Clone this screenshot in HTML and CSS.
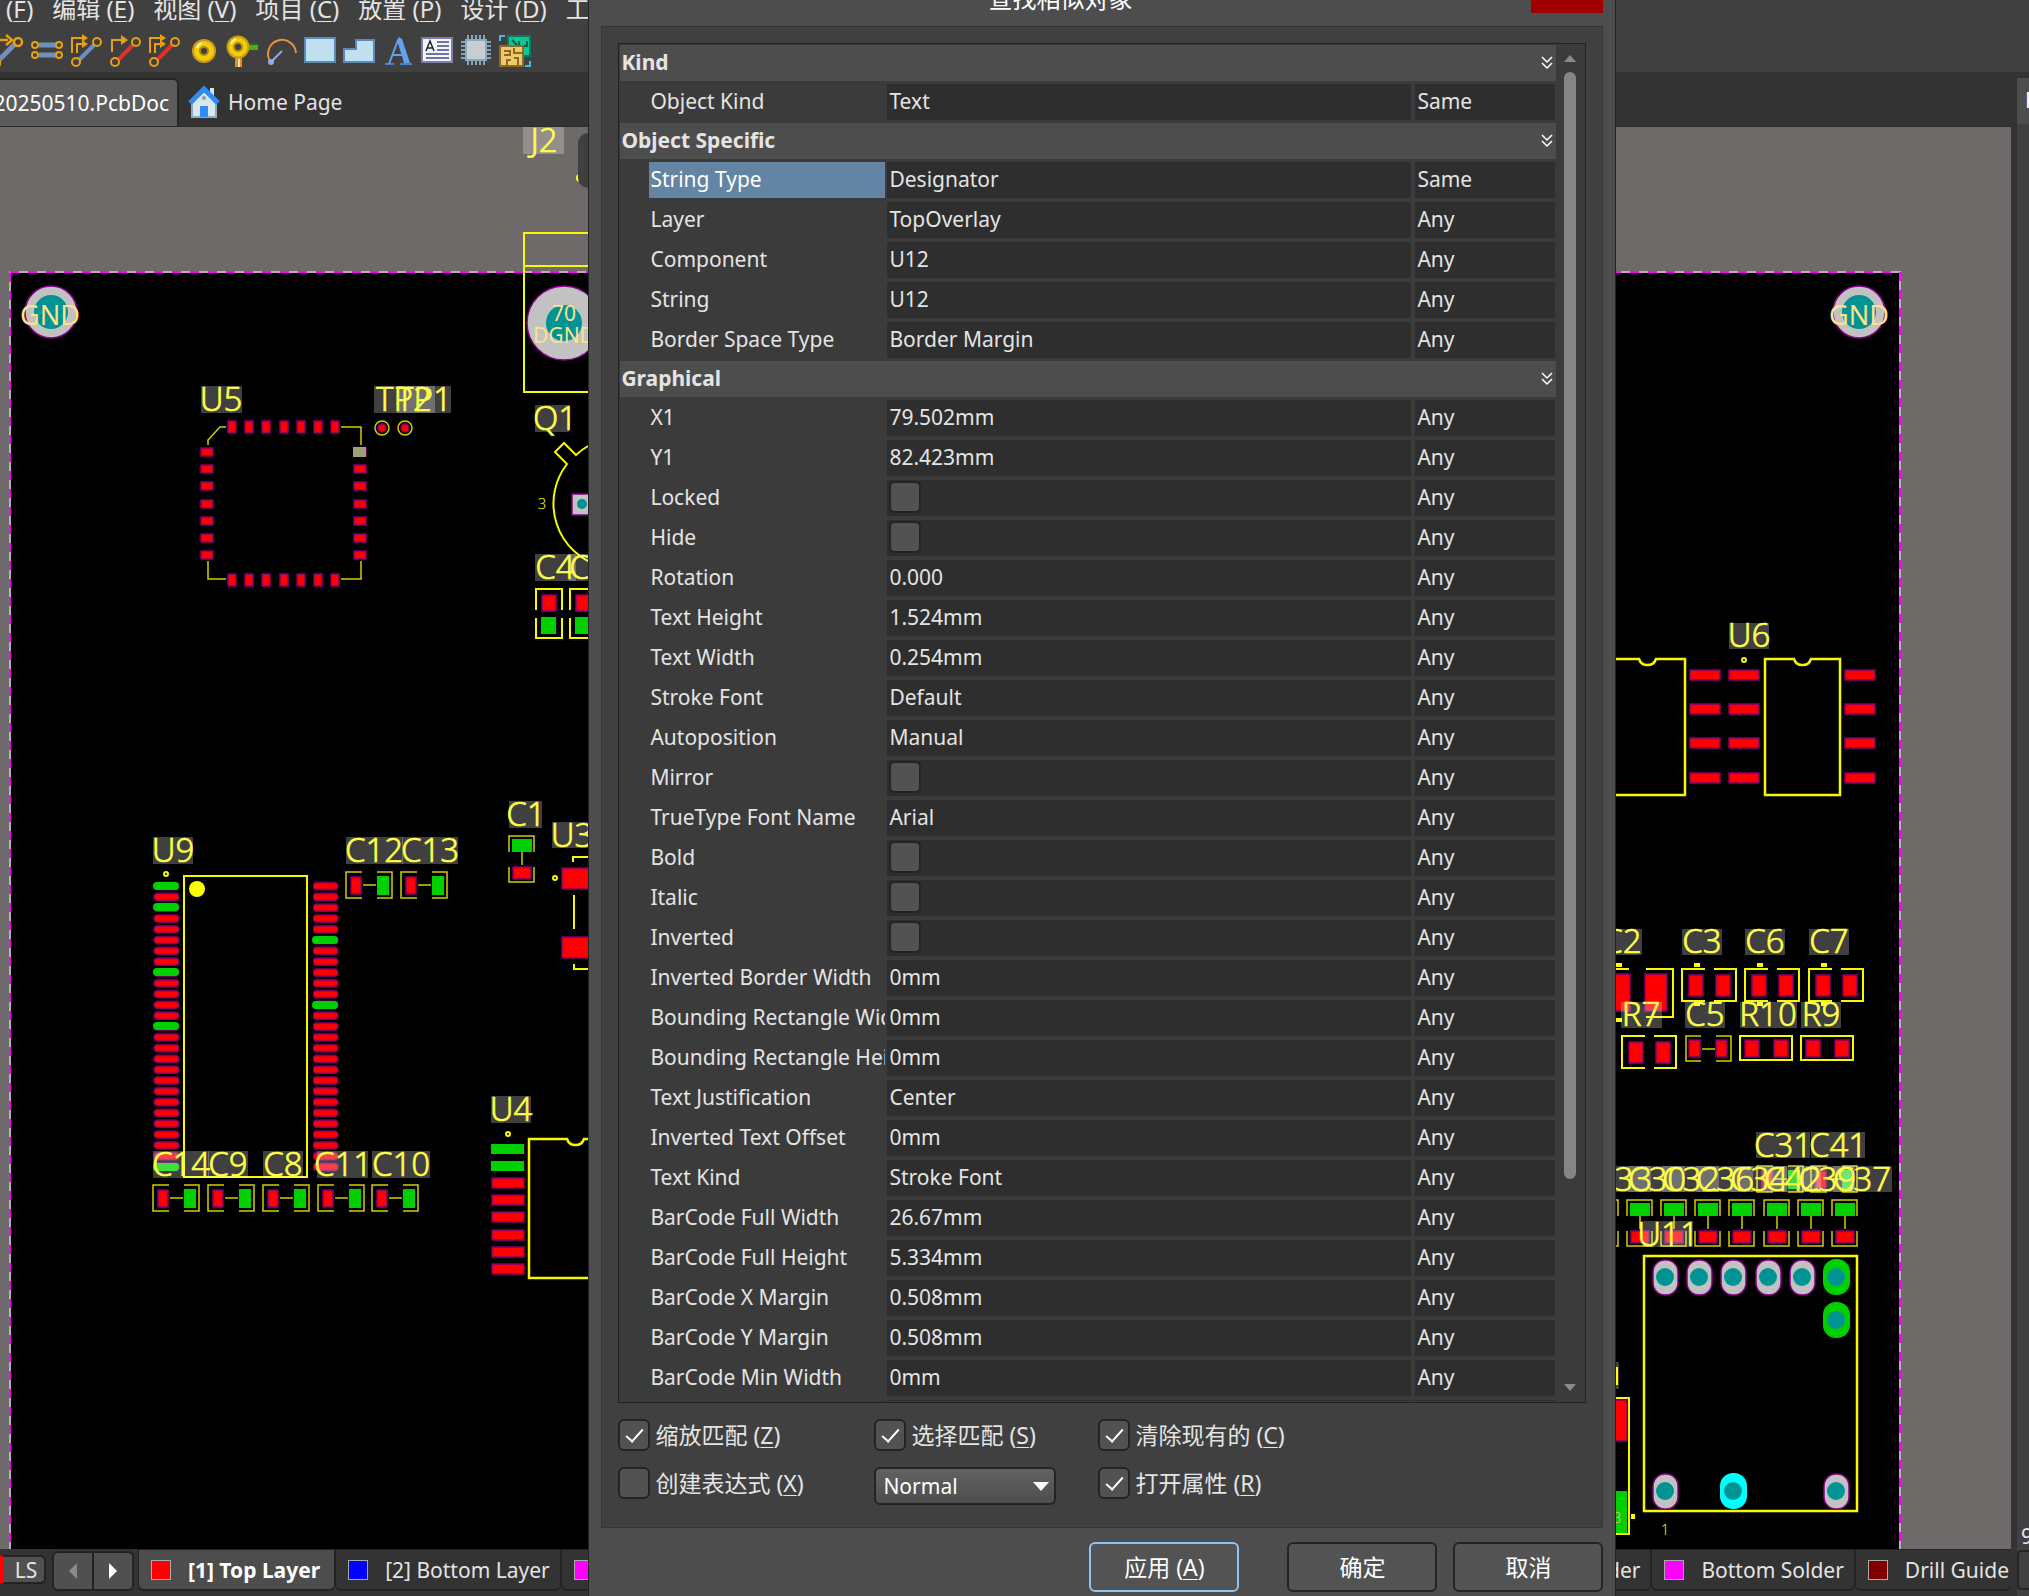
FILE: index.html
```html
<!DOCTYPE html>
<html lang="zh-CN">
<head>
<meta charset="utf-8">
<title>PCB Editor</title>
<link rel="stylesheet" href="styles.css">
</head>
<body>
<div class="app">
  <nav class="menubar">
    <a href="#">(<u>F</u>)</a><a href="#">编辑 (<u>E</u>)</a><a href="#">视图 (<u>V</u>)</a><a href="#">项目 (<u>C</u>)</a><a href="#">放置 (<u>P</u>)</a><a href="#">设计 (<u>D</u>)</a><a href="#">工具</a>
  </nav>
  <div class="toolbar">
    <button class="tool" aria-label="Route"><svg viewBox="0 0 32 34"><path d="M0 6h16M14 1l6 5-6 5" stroke="#e8a010" stroke-width="2.5" fill="none"/><path d="M6 27L23 10" stroke="#6f8fc0" stroke-width="5"/><g fill="none" stroke="#e8a010" stroke-width="2.5"><circle cx="26" cy="8" r="4"/><circle cx="4" cy="29" r="4"/></g></svg></button>
    <button class="tool" aria-label="Differential pair"><svg viewBox="0 0 32 34"><path d="M8 11h17M8 21h17" stroke="#6f8fc0" stroke-width="5"/><g fill="none" stroke="#e8a010" stroke-width="2"><circle cx="4" cy="11" r="3"/><circle cx="28" cy="11" r="3"/><circle cx="4" cy="21" r="3"/><circle cx="28" cy="21" r="3"/></g></svg></button>
    <button class="tool" aria-label="Multi route"><svg viewBox="0 0 32 34"><path d="M2 19V4h11M7 19v-9h6" stroke="#e8a010" stroke-width="2" fill="none"/><path d="M12 0l6 4-6 4zM12 6l6 4-6 4z" fill="#e8a010"/><path d="M9 26L24 11" stroke="#6f8fc0" stroke-width="4"/><g fill="none" stroke="#e8a010" stroke-width="2"><circle cx="27" cy="8" r="4"/><circle cx="6" cy="28" r="4"/></g></svg></button>
    <button class="tool" aria-label="Interactive route"><svg viewBox="0 0 32 34"><path d="M3 18V6h11" stroke="#e8a010" stroke-width="2" fill="none"/><path d="M12 1l7 5-7 5z" fill="#e8a010"/><path d="M9 26L24 11" stroke="#e0302a" stroke-width="4"/><g fill="none" stroke="#e8a010" stroke-width="2"><circle cx="27" cy="8" r="4"/><circle cx="6" cy="28" r="4"/></g></svg></button>
    <button class="tool" aria-label="Interactive multi route"><svg viewBox="0 0 32 34"><path d="M2 19V4h11M7 19v-9h6" stroke="#e8a010" stroke-width="2" fill="none"/><path d="M12 0l6 4-6 4zM12 6l6 4-6 4z" fill="#e8a010"/><path d="M9 26L24 11" stroke="#e0302a" stroke-width="4"/><g fill="none" stroke="#e8a010" stroke-width="2"><circle cx="27" cy="8" r="4"/><circle cx="6" cy="28" r="4"/></g></svg></button>
    <button class="tool" aria-label="Pad"><svg viewBox="0 0 32 34"><circle cx="17" cy="17" r="11" fill="#f2cc08" stroke="#c79a18" stroke-width="2"/><circle cx="17" cy="17" r="4" fill="#404040" stroke="#b08a10" stroke-width="2"/><path d="M10 14a8 8 0 0 1 5-5" stroke="#fff2a0" stroke-width="2" fill="none"/></svg></button>
    <button class="tool" aria-label="Via"><svg viewBox="0 0 32 34"><path d="M22 10h10v6H22z" fill="#4fa818"/><path d="M22 9h10v2H22z" fill="#1f6f10"/><path d="M9 22h7v11H9z" fill="#e88a18"/><path d="M12 22h2v11h-2z" fill="#ffe0b0"/><circle cx="12" cy="13" r="10.500" fill="#f2cc08" stroke="#c79a18" stroke-width="2"/><circle cx="12" cy="13" r="4" fill="#404040" stroke="#b08a10" stroke-width="2"/><path d="M5 10a8 8 0 0 1 5-5" stroke="#fff2a0" stroke-width="2" fill="none"/></svg></button>
    <button class="tool" aria-label="Arc"><svg viewBox="0 0 32 34"><path d="M5 27A14 14 0 1 1 31 19" stroke="#e8903c" stroke-width="2" fill="none"/><path d="M6 28L17 17" stroke="#86aef0" stroke-width="2"/><circle cx="6" cy="28" r="3" fill="#86aef0"/></svg></button>
    <button class="tool" aria-label="Fill"><svg viewBox="0 0 32 34"><path d="M1 4h30v24H1z" fill="#bfe0ec" stroke="#5c8ab8" stroke-width="2"/></svg></button>
    <button class="tool" aria-label="Polygon"><svg viewBox="0 0 32 34"><path d="M13 6h18v22H1V15h12z" fill="#bfe0ec" stroke="#5c8ab8" stroke-width="2"/></svg></button>
    <button class="tool" aria-label="String"><svg viewBox="0 0 32 34"><path d="M3 30h9M18 30h12" stroke="#4a80c8" stroke-width="2"/><path d="M7 30L16 6M11 21h11" stroke="#62a2ea" stroke-width="2" fill="none"/><path d="M15 6l2-3 3 2 8 24h-6z" fill="#62a2ea"/></svg></button>
    <button class="tool" aria-label="Text frame"><svg viewBox="0 0 32 34"><path d="M1 4h30v24H1z" fill="#f4f6fa" stroke="#7a7fae" stroke-width="2"/><path d="M5 17l4-10 4 10M6 14h6" stroke="#222" stroke-width="1.500" fill="none"/><path d="M16 8h12M16 12h12M16 16h12M5 20h23M5 24h23" stroke="#6d72a8" stroke-width="2"/></svg></button>
    <button class="tool" aria-label="Component"><svg viewBox="0 0 32 34"><path d="M8 1v30M12 1v30M16 1v30M20 1v30M24 1v30M1 8h30M1 12h30M1 16h30M1 20h30M1 24h30" stroke="#7fa6be" stroke-width="2"/><path d="M6 6h20v20H6z" fill="#c6ced4" stroke="#8aa8ba" stroke-width="2"/></svg></button>
    <button class="tool" aria-label="Embedded board"><svg viewBox="0 0 32 34"><path d="M1 7V2h5M31 27v5h-5" stroke="#4cb4f0" stroke-width="2" fill="none"/><path d="M9 2h22v20H9z" fill="#10c494" stroke="#0a7a5c" stroke-width="2"/><path d="M13 6l5 5M20 7v5M28 7v5h-4" stroke="#0a5c46" stroke-width="2" fill="none"/><path d="M1 12h23v20H1z" fill="#f2c868" stroke="#8a6a28" stroke-width="2"/><path d="M5 17h6v4H5M15 14v5h8M8 31v-5h4M19 31v-7h-4" stroke="#8a6a28" stroke-width="2" fill="none"/></svg></button>
  </div>
  <div class="workspace">
    <main class="document">
      <div class="doc-tabs">
        <a href="#" class="doc-tab doc-tab--active">20250510.PcbDoc</a>
        <a href="#" class="doc-tab">
          <svg class="home" viewBox="0 0 32 34"><path d="M22 3h4v10h-4z" fill="#d8e4ea"/><path d="M4 15L16 4l12 11v17H4z" fill="#dbe6f0" stroke="#8ab0bc" stroke-width="2"/><path d="M2 18L16 4l14 14" fill="none" stroke="#2f8cf4" stroke-width="5"/><circle cx="16" cy="13" r="2" fill="#7aa4b0"/><path d="M12 21h8v11h-8z" fill="#2f8cf4"/></svg>
          <span>Home Page</span></a>
      </div>
      <svg class="board" viewBox="0 127 2011 1422" preserveAspectRatio="xMinYMin slice">
        <defs>
          <pattern id="pins" patternUnits="userSpaceOnUse" x="153" y="880.600" width="159" height="10.800"><rect x="1" y="2" width="25" height="7" rx="3.500" class="pad"/></pattern>
          <g id="capH"><path class="silk thin" d="M16 0H0V26H16M31 0H46V26H31M17 13H30"/><path class="pad" d="M5 5h10v17H5z"/><path class="net" d="M31 4h12v19H31z"/></g>
          <g id="capV"><path class="silk thin" d="M0 16V0H25V16M0 31V46H25V31M13 16V29"/><path class="net" d="M3 3h20v13H3z"/><path class="pad" d="M4 31h18v12H4z"/></g>
          <g id="capQ"><path class="silk" d="M0 21V0H26V21M0 29V49H26V29"/><path class="pad" d="M6 6h14v16H6z"/><path class="net" d="M5 28h15v17H5z"/></g>
          <g id="capW"><path class="silk" d="M23 0H0V32H23M32 0H54V32H32"/><path class="pad" d="M7 6h14v21H7zM34 6h14v21H34z"/></g>
          <path id="marks" class="dot" d="M12-6h6v4h-6zM12 33h6v4h-6z"/>
          <g id="res"><path class="silk" d="M0 0h52v24H0z"/><path class="pad" d="M5 4h14v17H5zM34 4h14v17H34z"/></g>
          <g id="mount"><circle r="26" class="copper"/><circle r="17" class="hole"/></g>
          <g id="oval"><rect x="-12" y="-17" width="25" height="35" rx="12" class="copper"/><circle r="9" class="hole"/></g>
          <path id="pinsH" class="pad" d="M-4-6h8V6h-8zM13-6h8V6h-8zM30-6h8V6h-8zM48-6h8V6h-8zM65-6h8V6h-8zM82-6h8V6h-8zM99-6h8V6h-8z"/>
          <path id="pinsV" class="pad" d="M-6-4H6V4H-6zM-6 13H6v8H-6zM-6 30H6v8H-6zM-6 48H6v8H-6zM-6 65H6v8H-6zM-6 82H6v8H-6zM-6 99H6v8H-6z"/>
          <path id="so4" class="pad" d="M0-5h30V5H0zM0 29h30v10H0zM0 63h30v10H0zM0 98h30v10H0z"/>
        </defs>
        <rect x="10" y="272" width="1890" height="1400" class="area"/>
        <rect x="10" y="272" width="1890" height="1400" class="edge"/>

        <use href="#mount" x="51" y="312"/><text x="50" y="325" class="pin">GND</text>
        <use href="#mount" x="1859" y="312"/><text x="1859" y="325" class="pin">GND</text>
        <path class="silk" d="M620 233H524V392H620M524 266H620"/>
        <circle cx="564" cy="323" r="37" class="copper"/><circle cx="564" cy="323" r="18" class="hole"/>
        <text x="564" y="321" class="pin pin--mid">70</text><text x="564" y="343" class="pin pin--mid">DGND</text>

        <path class="silk thin" d="M208 445V440L220 427H226M341 427H361V445M208 561V579H226M341 579H361V561"/>
        <use href="#pinsH" x="232" y="427"/><use href="#pinsH" x="232" y="580"/>
        <use href="#pinsV" x="207" y="452"/><use href="#pinsV" x="360" y="452"/>
        <path fill="#a0a078" d="M353 447h13v10h-13z"/>
        <g class="silk thin"><circle cx="382" cy="428" r="7"/><circle cx="405" cy="428" r="7"/></g>
        <g class="pad"><circle cx="382" cy="428" r="4"/><circle cx="405" cy="428" r="4"/></g>

        <path class="silk" d="M588 446A65 65 0 0 0 576 455L564 443 555 452 567 464A65 65 0 0 0 600 566"/>
        <path class="copper" d="M572 494h22v21h-22z"/><circle cx="582" cy="504" r="5" class="hole"/>
        <text class="tiny" x="542" y="509">3</text>
        <use href="#capQ" x="536" y="589"/><use href="#capQ" x="570" y="589"/>

        <path class="silk" d="M184 876H307V1177H184z"/>
        <circle cx="166" cy="874" r="2" class="silk"/><circle cx="197" cy="889" r="8" class="dot"/>
        <path fill="url(#pins)" d="M153 881h27v291h-27zM312 881h27v291h-27z"/>
        <g class="net"><rect x="153" y="882" width="26" height="8" rx="4"/><rect x="153" y="903" width="26" height="8" rx="4"/><rect x="153" y="968" width="26" height="8" rx="4"/><rect x="153" y="1022" width="26" height="8" rx="4"/><rect x="153" y="1163" width="26" height="8" rx="4"/><rect x="312" y="936" width="26" height="8" rx="4"/><rect x="312" y="1001" width="26" height="8" rx="4"/></g>
        <use href="#capH" x="346" y="872"/><use href="#capH" x="401" y="872"/>
        <use href="#capH" x="153" y="1185"/><use href="#capH" x="208" y="1185"/><use href="#capH" x="263" y="1185"/><use href="#capH" x="318" y="1185"/><use href="#capH" x="372" y="1185"/>
        <use href="#capV" x="509" y="836"/>

        <circle cx="555" cy="878" r="2" class="silk"/><path class="silk" d="M573 862V857H600M574 895V929M574 964V969H600"/>
        <path class="pad" d="M562 868h40v21h-40zM562 937h40v21h-40z"/>
        <circle cx="508" cy="1134" r="2" class="silk"/>
        <path class="silk bold" d="M600 1139H584A9 9 0 0 1 567 1139H529V1278H600"/>
        <path class="net" d="M491 1144h33v10h-33zM491 1161h33v10h-33z"/>
        <path class="pad" d="M492 1178h32v10h-32zM492 1195h32v10h-32zM492 1212h32v10h-32zM492 1230h32v10h-32zM492 1247h32v10h-32zM492 1264h32v10h-32z"/>

        <path class="silk bold" d="M1600 659H1639A9 9 0 0 0 1656 659H1685V795H1600M1765 659H1794A9 9 0 0 0 1811 659H1840V795H1765z"/>
        <circle cx="1744" cy="660" r="2" class="silk"/>
        <use href="#so4" x="1690" y="675"/><use href="#so4" x="1729" y="675"/><use href="#so4" x="1845" y="675"/>

        <path class="silk" d="M1600 969H1629M1646 969H1673V1017H1646"/><path class="pad" d="M1600 974h30v37h-30zM1645 974h22v37h-22z"/><path class="dot" d="M1616 963h6v4h-6zM1616 1018h6v4h-6z"/>
        <use href="#capW" x="1682" y="969"/><use href="#capW" x="1745" y="969"/><use href="#capW" x="1809" y="969"/><use href="#capW" x="1622" y="1036"/>
        <use href="#marks" x="1682" y="969"/><use href="#marks" x="1745" y="969"/><use href="#marks" x="1809" y="969"/>
        <path class="silk thin" d="M1701 1036H1686V1061H1701M1716 1036H1731V1061H1716M1702 1049H1715"/><path class="pad" d="M1689 1040h11v17h-11zM1716 1040h11v17h-11z"/>
        <use href="#res" x="1740" y="1036"/><use href="#res" x="1801" y="1036"/>

        <use href="#capH" x="1757" y="1166"/><use href="#capH" x="1811" y="1166"/>
        <use href="#capV" x="1593" y="1200"/><use href="#capV" x="1627" y="1200"/><use href="#capV" x="1661" y="1200"/><use href="#capV" x="1695" y="1200"/><use href="#capV" x="1729" y="1200"/><use href="#capV" x="1764" y="1200"/><use href="#capV" x="1798" y="1200"/><use href="#capV" x="1832" y="1200"/>
        <path class="silk bold" d="M1644 1256H1857V1511H1644z"/>
        <use href="#oval" x="1665" y="1277"/><use href="#oval" x="1699" y="1277"/><use href="#oval" x="1733" y="1277"/><use href="#oval" x="1768" y="1277"/><use href="#oval" x="1802" y="1277"/><use href="#oval" x="1665" y="1491"/><use href="#oval" x="1836" y="1491"/>
        <g class="net"><rect x="1823" y="1259" width="27" height="36" rx="13"/><rect x="1823" y="1302" width="27" height="36" rx="13"/></g>
        <rect x="1720" y="1473" width="27" height="36" rx="13" fill="#0ff"/>
        <g class="hole"><circle cx="1836" cy="1277" r="9"/><circle cx="1836" cy="1320" r="9"/><circle cx="1733" cy="1491" r="9"/></g>
        <text x="1665" y="1535" class="tiny">1</text>
        <path class="silk" d="M1600 1398H1629V1534H1600"/><path class="pad" d="M1600 1400h27v41h-27z"/><path class="net" d="M1600 1491h27v42h-27z"/><path class="dot" d="M1631 1514h4v5h-4z"/>
        <text x="1617" y="1523" class="tiny tiny--pink">3</text>
        <path class="tag" d="M1600 1362h19v27h-19z"/><path class="dot" d="M1616 1367h2v18h-2z"/>

        <path class="tag" d="M523 127h41v27h-41zM201 386h41v27h-41zM374 386h61v27h-61zM535 405h34v27h-34zM535 554h41v27h-41zM153 837h40v27h-40zM346 837h57v27h-57zM153 1151h56v27h-56zM263 1151h40v27h-40zM317 1151h51v27h-51zM372 1151h58v27h-58zM509 801h33v27h-33zM552 822h41v26h-41zM491 1096h40v27h-40z"/>
        <path class="tag" d="M397 386h54v27h-54zM569 554h41v27h-41zM402 837h56v27h-56zM208 1151h40v27h-40z"/>
        <path class="tag" d="M1729 623h40v26h-40zM1601 929h41v26h-41zM1682 929h40v26h-40zM1745 929h40v26h-40zM1809 929h40v26h-40zM1621 1002h41v26h-41zM1685 1002h40v26h-40zM1740 1002h57v26h-57zM1801 1002h40v26h-40zM1756 1132h54v26h-54zM1811 1132h54v26h-54zM1643 1221h50v26h-50z"/>
        <g class="tag"><path d="M1594 1166h57v26h-57z"/><path d="M1628 1166h57v26h-57z"/><path d="M1662 1166h57v26h-57z"/><path d="M1696 1166h57v26h-57z"/><path d="M1730 1166h57v26h-57z"/><path d="M1764 1166h57v26h-57z"/><path d="M1798 1166h57v26h-57z"/><path d="M1833 1166h59v26h-59z"/></g>
        <g class="label">
          <text x="544" y="152">J2</text><text x="221" y="411">U5</text><text x="404" y="411">TP2</text><text x="424" y="411">TP1</text>
          <text x="555" y="430">Q1</text><text x="555" y="579">C4</text><text x="589" y="579">C3</text>
          <text x="173" y="862">U9</text><text x="374" y="862">C12</text><text x="430" y="862">C13</text>
          <text x="181" y="1176">C14</text><text x="228" y="1176">C9</text><text x="283" y="1176">C8</text><text x="343" y="1176">C11</text><text x="401" y="1176">C10</text>
          <text x="526" y="826">C1</text><text x="572" y="847">U3</text><text x="511" y="1121">U4</text>
          <text x="1749" y="647">U6</text><text x="1622" y="953">C2</text><text x="1702" y="953">C3</text><text x="1765" y="953">C6</text><text x="1829" y="953">C7</text>
          <text x="1641" y="1026">R7</text><text x="1705" y="1026">C5</text><text x="1768" y="1026">R10</text><text x="1821" y="1026">R9</text>
          <text x="1783" y="1157">C31</text><text x="1838" y="1157">C41</text><text x="1668" y="1246">U11</text>
          <text x="1623" y="1191">C33</text><text x="1657" y="1191">C30</text><text x="1691" y="1191">C32</text><text x="1725" y="1191">C36</text><text x="1759" y="1191">C34</text><text x="1793" y="1191">C42</text><text x="1827" y="1191">C39</text><text x="1862" y="1191">C37</text>
        </g>
        <circle cx="580" cy="178" r="4" class="dot"/><rect x="578" y="133" width="60" height="55" rx="10" fill="#404040"/>
      </svg>
      <div class="layers">
        <div class="layer-group">
          <button class="layer-set">LS</button>
          <div class="layer-nav">
            <button aria-label="Previous layer"><svg viewBox="0 0 10 16"><path d="M9 0v16L1 8z" fill="#8a8a8a"/></svg></button>
            <button aria-label="Next layer"><svg viewBox="0 0 10 16"><path d="M1 0v16l8-8z" fill="#fff"/></svg></button>
          </div>
          <a href="#" class="layer layer--active"><i class="swatch swatch--red"></i>[1] Top Layer</a>
          <a href="#" class="layer"><i class="swatch swatch--blue"></i>[2] Bottom Layer</a>
          <a href="#" class="layer"><i class="swatch swatch--magenta"></i></a>
        </div>
        <div class="layer-group layer-group--end">
          <a href="#" class="layer">Top Solder</a>
          <a href="#" class="layer"><i class="swatch swatch--magenta"></i>Bottom Solder</a>
          <a href="#" class="layer layer--last"><i class="swatch swatch--maroon"></i>Drill Guide</a>
        </div>
      </div>
    </main>
    <aside class="side">
      <div class="side-tab">P</div>
      <div class="side-count">9</div>
      <div class="side-foot"></div>
    </aside>
  </div>
</div>

<section class="dialog" role="dialog" aria-labelledby="dialog-title">
  <header class="dialog-head"><h1 id="dialog-title">查找相似对象</h1><button class="close" aria-label="关闭"></button></header>
  <div class="panel">
    <div class="list">
      <div class="list-view">
        <table class="props">
          <colgroup><col class="col-name"><col><col class="col-match"></colgroup>
          <tbody>
            <tr class="group"><th colspan="3"><div>Kind<svg class="chev" viewBox="0 0 12 14"><path d="M1 1l5 5 5-5M1 7l5 5 5-5"/></svg></div></th></tr>
            <tr class="last"><th><span>Object Kind</span></th><td>Text</td><td>Same</td></tr>
            <tr class="group"><th colspan="3"><div>Object Specific<svg class="chev" viewBox="0 0 12 14"><path d="M1 1l5 5 5-5M1 7l5 5 5-5"/></svg></div></th></tr>
            <tr class="selected"><th><span>String Type</span></th><td>Designator</td><td>Same</td></tr>
            <tr><th><span>Layer</span></th><td>TopOverlay</td><td>Any</td></tr>
            <tr><th><span>Component</span></th><td>U12</td><td>Any</td></tr>
            <tr><th><span>String</span></th><td>U12</td><td>Any</td></tr>
            <tr class="last"><th><span>Border Space Type</span></th><td>Border Margin</td><td>Any</td></tr>
            <tr class="group"><th colspan="3"><div>Graphical<svg class="chev" viewBox="0 0 12 14"><path d="M1 1l5 5 5-5M1 7l5 5 5-5"/></svg></div></th></tr>
            <tr><th><span>X1</span></th><td>79.502mm</td><td>Any</td></tr>
            <tr><th><span>Y1</span></th><td>82.423mm</td><td>Any</td></tr>
            <tr><th><span>Locked</span></th><td><input type="checkbox" class="box" aria-label="Locked"></td><td>Any</td></tr>
            <tr><th><span>Hide</span></th><td><input type="checkbox" class="box" aria-label="Hide"></td><td>Any</td></tr>
            <tr><th><span>Rotation</span></th><td>0.000</td><td>Any</td></tr>
            <tr><th><span>Text Height</span></th><td>1.524mm</td><td>Any</td></tr>
            <tr><th><span>Text Width</span></th><td>0.254mm</td><td>Any</td></tr>
            <tr><th><span>Stroke Font</span></th><td>Default</td><td>Any</td></tr>
            <tr><th><span>Autoposition</span></th><td>Manual</td><td>Any</td></tr>
            <tr><th><span>Mirror</span></th><td><input type="checkbox" class="box" aria-label="Mirror"></td><td>Any</td></tr>
            <tr><th><span>TrueType Font Name</span></th><td>Arial</td><td>Any</td></tr>
            <tr><th><span>Bold</span></th><td><input type="checkbox" class="box" aria-label="Bold"></td><td>Any</td></tr>
            <tr><th><span>Italic</span></th><td><input type="checkbox" class="box" aria-label="Italic"></td><td>Any</td></tr>
            <tr><th><span>Inverted</span></th><td><input type="checkbox" class="box" aria-label="Inverted"></td><td>Any</td></tr>
            <tr><th><span>Inverted Border Width</span></th><td>0mm</td><td>Any</td></tr>
            <tr><th><span>Bounding Rectangle Width</span></th><td>0mm</td><td>Any</td></tr>
            <tr><th><span>Bounding Rectangle Height</span></th><td>0mm</td><td>Any</td></tr>
            <tr><th><span>Text Justification</span></th><td>Center</td><td>Any</td></tr>
            <tr><th><span>Inverted Text Offset</span></th><td>0mm</td><td>Any</td></tr>
            <tr><th><span>Text Kind</span></th><td>Stroke Font</td><td>Any</td></tr>
            <tr><th><span>BarCode Full Width</span></th><td>26.67mm</td><td>Any</td></tr>
            <tr><th><span>BarCode Full Height</span></th><td>5.334mm</td><td>Any</td></tr>
            <tr><th><span>BarCode X Margin</span></th><td>0.508mm</td><td>Any</td></tr>
            <tr><th><span>BarCode Y Margin</span></th><td>0.508mm</td><td>Any</td></tr>
            <tr><th><span>BarCode Min Width</span></th><td>0mm</td><td>Any</td></tr>
            <tr><th></th><td></td><td></td></tr>
          </tbody>
        </table>
      </div>
      <div class="scroll">
        <svg class="arrow" viewBox="0 0 12 7"><path d="M0 7h12L6 0z"/></svg>
        <div class="track"><div class="thumb"></div></div>
        <svg class="arrow" viewBox="0 0 12 7"><path d="M0 0h12L6 7z"/></svg>
      </div>
    </div>
    <div class="options">
      <label><input type="checkbox" class="box" checked><span>缩放匹配 (<u>Z</u>)</span></label>
      <label><input type="checkbox" class="box" checked><span>选择匹配 (<u>S</u>)</span></label>
      <label><input type="checkbox" class="box" checked><span>清除现有的 (<u>C</u>)</span></label>
      <label><input type="checkbox" class="box"><span>创建表达式 (<u>X</u>)</span></label>
      <div class="picker"><select aria-label="Mask mode"><option>Normal</option></select><svg viewBox="0 0 16 9"><path d="M0 0h16L8 9z"/></svg></div>
      <label><input type="checkbox" class="box" checked><span>打开属性 (<u>R</u>)</span></label>
    </div>
  </div>
  <footer class="actions">
    <button class="btn btn--default">应用 (<u>A</u>)</button><button class="btn">确定</button><button class="btn">取消</button>
  </footer>
</section>
</body>
</html>
```
FILE: styles.css
```css
* { box-sizing: border-box; }
body {
  margin: 0;
  height: 100vh;
  position: relative;
  overflow: hidden;
  background: #404040;
  color: #e4e4e4;
  font: 21px/28px "Noto Sans", "Noto Sans CJK SC", sans-serif;
}
a { color: inherit; text-decoration: none; }
button, select { font: inherit; color: inherit; margin: 0; padding: 0; border: 0; background: none; }
u { text-underline-offset: 3px; text-decoration-thickness: 1px; }

.app { height: 100%; display: flex; flex-direction: column; }
.menubar {
  display: flex;
  gap: 19px;
  height: 34px;
  padding-left: 6px;
  font-size: 24px;
  line-height: 18px;
  white-space: nowrap;
}
.toolbar { display: flex; gap: 7px; height: 38px; margin-left: -8px; }
.tool { width: 32px; height: 34px; flex: none; }
.tool svg { display: block; width: 32px; height: 34px; }

.workspace { flex: 1; min-height: 0; display: flex; background: #333; }
.document { flex: 1; min-width: 0; display: flex; flex-direction: column; }
.doc-tabs { display: flex; height: 55px; padding-top: 6px; border-bottom: 1px solid #2a2a2a; }
.doc-tab { display: flex; align-items: center; gap: 8px; padding: 0 9px; white-space: nowrap; }
.doc-tab--active {
  width: 179px;
  justify-content: flex-end;
  padding: 0 8px 0 0;
  background: #5c5c5c;
  border: 2px solid #262626;
  border-width: 2px 2px 0 0;
  border-radius: 0 6px 0 0;
  color: #fff;
}
.home { width: 32px; height: 34px; }
.board { flex: 1; min-height: 0; width: 100%; background: #6e6a69; }

.area { fill: #000; stroke: #c0a8c0; stroke-width: 2; }
.edge { fill: none; stroke: #f0f; stroke-width: 2; stroke-dasharray: 9 9; }
.copper { fill: #c2c2c2; stroke: #860086; stroke-width: 1.5; }
.hole { fill: #009393; stroke: none; }
.pad { fill: #f00; stroke: #800070; stroke-width: 1.5; }
.net { fill: #00d000; }
.dot { fill: #ff0; }
.silk { fill: none; stroke: #f8f800; stroke-width: 2; }
.bold { stroke-width: 2.5; }
.thin { stroke: #d0d000; stroke-width: 1.5; }
.tag { fill: #fff; fill-opacity: 0.25; }
.label { fill: #ffff48; stroke: #ffff48; stroke-width: 0.6; font-size: 33px; font-weight: 300; text-anchor: middle; }
.pin { fill: #ffe08c; font-size: 27px; text-anchor: middle; }
.pin--mid { font-size: 21px; }
.tiny { fill: #f0f020; font-size: 15px; font-weight: 300; text-anchor: middle; }
.tiny--pink { fill: #ffb090; }

.layers { display: flex; justify-content: space-between; height: 47px; background: #333; overflow: hidden; }
.layer-group { display: flex; align-items: flex-start; }
.layer-set {
  width: 46px;
  height: 29px;
  margin: 6px 6px 0 0;
  padding-left: 4px;
  background: #505050;
  border: 2px solid #232323;
  border-left: 4px solid #f00;
  border-radius: 0 6px 6px 0;
  line-height: 24px;
}
.layer-nav {
  display: flex;
  width: 82px;
  height: 40px;
  margin: 2px 4px 0 0;
  background: #505050;
  border: 2px solid #232323;
  border-radius: 6px;
}
.layer-nav button { flex: 1; }
.layer-nav button + button { border-left: 2px solid #232323; }
.layer-nav svg { width: 10px; height: 16px; }
.layer {
  display: flex;
  align-items: center;
  gap: 17px;
  height: 42px;
  padding: 0 10px 0 12px;
  border: 1px solid #232323;
  border-width: 1px 1px 2px;
  border-radius: 0 0 6px 6px;
  white-space: nowrap;
}
.layer--active { padding-right: 14px; background: #4d4d4d; color: #fff; font-weight: 700; }
.layer--last { padding-right: 2px; border-right: 0; }
.swatch { width: 20px; height: 20px; border: 1px solid #aaa; }
.swatch--red { background: #f00; }
.swatch--blue { background: #00f; }
.swatch--magenta { background: #f0f; }
.swatch--maroon { background: #800000; }

.side { width: 12px; margin: 6px 0 0 6px; display: flex; flex-direction: column; background: #404040; overflow: hidden; }
.side-tab { height: 46px; padding-left: 8px; background: #4d4d4d; line-height: 44px; color: #fff; }
.side-count { margin-top: auto; padding-left: 4px; line-height: 28px; }
.side-foot { width: 20px; height: 40px; margin-bottom: 6px; border: 2px solid #262626; border-radius: 4px; }

.dialog {
  position: absolute;
  top: 0;
  left: 29%;
  width: 1028px;
  max-width: 70%;
  height: 100%;
  padding: 0 12px;
  display: flex;
  flex-direction: column;
  background: #4d4d4d;
  border: 1px solid #222;
  border-width: 0 1px;
}
.dialog-head { display: grid; grid-template-columns: 1fr 72px; height: 26px; }
h1 { margin: -14px 12px 0 0; text-align: center; font-size: 24px; line-height: 26px; font-weight: 400; color: #fff; }
.close { height: 13px; background: #a00000; }
.panel {
  flex: 1;
  min-height: 0;
  padding: 16px 16px 22px;
  display: flex;
  flex-direction: column;
  gap: 16px;
  background: #404040;
  border: 1px solid #353535;
}
.list { flex: 1; min-height: 0; display: flex; padding: 1px; background: #3b3b3b; border: 1px solid #222; }
.list-view { flex: 1; min-width: 0; overflow: hidden; }
.props { width: 100%; table-layout: fixed; border-collapse: separate; border-spacing: 0; line-height: 34px; }
.col-name { width: 267px; }
.col-match { width: 141px; }
.props th, .props td { height: 40px; padding: 0; text-align: left; vertical-align: top; font-weight: 400; border-bottom: 4px solid #3b3b3b; white-space: nowrap; overflow: hidden; }
.props td { padding-left: 2px; background: #2e2e2e; border-right: 4px solid #3b3b3b; }
.props td:last-child { border-right-width: 1px; }
.props th span { display: block; height: 36px; margin: 0 2px 0 29px; padding-left: 1px; overflow: hidden; }
.props .last th, .props .last td, .props .group th { height: 39px; border-bottom-width: 3px; }
.props .group div { display: flex; justify-content: space-between; height: 36px; padding: 0 3px 0 1px; background: #4d4d4d; font-weight: 700; }
.selected th span { background: #6484a4; color: #fff; }
.chev { width: 12px; height: 36px; fill: none; stroke: #fff; stroke-width: 1.5; }

.box {
  appearance: none;
  display: block;
  flex: none;
  width: 32px;
  height: 32px;
  margin: 0;
  background: #525252;
  border: 2px solid #242424;
  border-radius: 6px;
}
.props .box { margin-top: 1px; }
.box:checked::before {
  content: "";
  display: block;
  width: 7px;
  height: 15px;
  margin: 4px auto;
  border: solid #fff;
  border-width: 0 2px 2px 0;
  transform: rotate(42deg);
}
.scroll { width: 28px; display: flex; flex-direction: column; align-items: center; padding: 10px 0; }
.arrow { width: 12px; height: 7px; fill: #8a8a8a; }
.track { flex: 1; width: 12px; margin: 10px 0; }
.thumb { height: 85%; background: #858585; border-radius: 6px; }

.options { display: grid; grid-template-columns: 256px 224px 1fr; row-gap: 16px; align-items: start; font-size: 23px; line-height: 32px; }
.options label { display: flex; gap: 5px; white-space: nowrap; }
.picker { position: relative; width: 182px; height: 38px; font-size: 21px; }
.picker select {
  appearance: none;
  width: 100%;
  height: 100%;
  padding-left: 7px;
  color: #fff;
  background: linear-gradient(#626262, #4e4e4e);
  border: 2px solid #242424;
  border-radius: 6px;
}
.picker svg { position: absolute; right: 7px; top: 15px; width: 16px; height: 9px; fill: #fff; }

.actions { display: flex; justify-content: flex-end; gap: 16px; height: 68px; padding-top: 14px; }
.btn { width: 150px; height: 50px; color: #fff; font-size: 23px; background: #535353; border: 2px solid #242424; border-radius: 6px; }
.btn--default { margin-right: 32px; border-color: #8ec4f4; }
```
